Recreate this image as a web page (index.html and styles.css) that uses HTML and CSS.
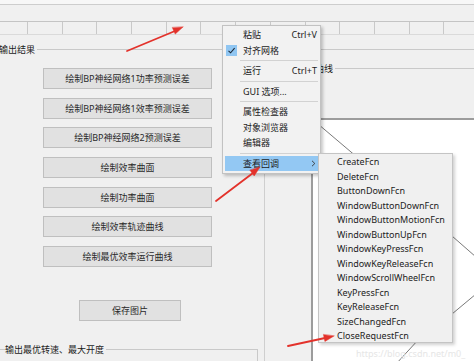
FILE: index.html
```html
<!DOCTYPE html>
<html lang="zh-CN">
<head>
  <meta charset="UTF-8" />
  <title>GUIDE 布局</title>
  <link rel="stylesheet" href="styles.css">
</head>
<body>

  <div class="topbar"></div>
  <div class="toolstrip"></div>
  <div class="ruler">
    <span class="first"></span>
    <span></span><span></span><span></span><span></span><span></span><span></span>
    <span></span><span></span><span></span><span></span><span></span><span></span><span></span>
  </div>

  <div class="group outer">
    <div class="group-title first-title">输出结果</div>
    <div class="group-body">

      <div class="controls">
        <div class="btn-list">
          <div class="btn">绘制BP神经网络1功率预测误差</div>
          <div class="btn">绘制BP神经网络1效率预测误差</div>
          <div class="btn">绘制BP神经网络2预测误差</div>
          <div class="btn">绘制效率曲面</div>
          <div class="btn">绘制功率曲面</div>
          <div class="btn">绘制效率轨迹曲线</div>
          <div class="btn">绘制最优效率运行曲线</div>
        </div>
        <div class="btn save">保存图片</div>
        <div class="group lower">
          <div class="group-title">输出最优转速、最大开度</div>
        </div>
      </div>

      <div class="group plot-group">
        <div class="group-title plot-title">曲线</div>
        <div class="axes">
          <svg width="161" height="241" viewBox="313 120 161 241">
            <g stroke="#6a6a6a" stroke-width="0.9">
              <line x1="318" y1="124" x2="364" y2="163" />
              <line x1="452" y1="236" x2="476" y2="257" />
              <line x1="452" y1="314" x2="476" y2="294" />
              <line x1="419" y1="339" x2="396" y2="364" />
            </g>
            <text x="356" y="357" class="watermark">https://blog.csdn.net/m0_</text>
          </svg>
        </div>
      </div>

    </div>
  </div>

  <!-- context menu -->
  <div class="menu">
    <div class="menu-item"><span></span><span>粘贴</span><span>Ctrl+V</span></div>
    <div class="menu-item">
      <span class="check">
        <svg width="11" height="11" viewBox="0 0 11 11"><polyline points="2.5,5.8 4.6,7.8 8.6,3.2" fill="none" stroke="#1d2a38" stroke-width="1.1"/></svg>
      </span>
      <span>对齐网格</span><span></span>
    </div>
    <div class="menu-sep"></div>
    <div class="menu-item"><span></span><span>运行</span><span>Ctrl+T</span></div>
    <div class="menu-sep"></div>
    <div class="menu-item"><span></span><span>GUI 选项...</span><span></span></div>
    <div class="menu-sep"></div>
    <div class="menu-item"><span></span><span>属性检查器</span><span></span></div>
    <div class="menu-item"><span></span><span>对象浏览器</span><span></span></div>
    <div class="menu-item"><span></span><span>编辑器</span><span></span></div>
    <div class="menu-sep"></div>
    <div class="menu-item active">
      <span></span><span>查看回调</span>
      <span class="chev"><svg width="5" height="7" viewBox="0 0 5 7"><polyline points="1,0.8 3.8,3.5 1,6.2" fill="none" stroke="#333" stroke-width="0.9"/></svg></span>
    </div>
  </div>

  <div class="submenu">
    <div class="sub-item">CreateFcn</div>
    <div class="sub-item">DeleteFcn</div>
    <div class="sub-item">ButtonDownFcn</div>
    <div class="sub-item">WindowButtonDownFcn</div>
    <div class="sub-item">WindowButtonMotionFcn</div>
    <div class="sub-item">WindowButtonUpFcn</div>
    <div class="sub-item">WindowKeyPressFcn</div>
    <div class="sub-item">WindowKeyReleaseFcn</div>
    <div class="sub-item">WindowScrollWheelFcn</div>
    <div class="sub-item">KeyPressFcn</div>
    <div class="sub-item">KeyReleaseFcn</div>
    <div class="sub-item">SizeChangedFcn</div>
    <div class="sub-item">CloseRequestFcn</div>
  </div>

  <!-- red annotation arrows -->
  <svg class="arrows" width="474" height="361" viewBox="0 0 474 361">
    <g fill="#e3322b" stroke="#e3322b" stroke-linecap="round">
      <line x1="127" y1="51" x2="175" y2="31" stroke-width="1.8" />
      <polygon points="183,27 175.2,34.1 172.4,27.7" stroke-width="0.5" />
      <line x1="216" y1="201" x2="253" y2="173" stroke-width="1.8" />
      <polygon points="260,167 254.2,175.9 250,170.3" stroke-width="0.5" />
      <line x1="288" y1="346" x2="325" y2="338" stroke-width="1.8" />
      <polygon points="334,336 324.9,341.5 323.5,334.7" stroke-width="0.5" />
    </g>
  </svg>

</body>
</html>
```

FILE: styles.css
```css
* {
  box-sizing: border-box;
}
body {
  margin: 0;
  width: 474px;
  height: 361px;
  overflow: hidden;
  position: relative;
  background: #f0f0f0;
  font-family: "Noto Sans", "Noto Sans CJK SC", sans-serif;
  font-size: 9px;
  color: #1c1c1c;
}

/* top bars */
.topbar {
  height: 5px;
  background: #f7f7f7;
  border-bottom: 1px solid #cdcdcd;
}
.toolstrip {
  height: 16px;
}
.ruler {
  display: flex;
  height: 14px;
  border-top: 1px solid #c4c4c4;
  border-bottom: 1px solid #dadada;
  overflow: hidden;
}
.ruler span {
  flex: none;
  width: 34.7px;
  border-right: 1px solid #c9c9c9;
}
.ruler span.first {
  width: 28px;
}

/* titled panels */
.group {
  border-top: 1px solid #c9c9c9;
}
.group-title {
  width: max-content;
  margin-top: -7px;
  line-height: 13px;
  padding-right: 2px;
  background: #f0f0f0;
}
.outer {
  margin-top: 14px;
}
.first-title {
  margin-left: -1px;
}
.group-body {
  display: flex;
}

/* left column */
.controls {
  flex: none;
  width: 264px;
  padding-top: 12px;
}
.btn-list {
  display: flex;
  flex-direction: column;
  gap: 8.7px;
}
.btn {
  width: 169px;
  height: 21px;
  margin-left: 43px;
  background: #e1e1e1;
  border: 1px solid #bfbfbf;
  color: #2a2a2a;
  text-align: center;
  line-height: 19px;
}
.btn.save {
  width: 102px;
  margin-left: 79px;
  margin-top: 33px;
}
.lower {
  margin-top: 28px;
  margin-left: -3px;
  width: 261px;
  height: 20px;
  border-right: 1px solid #c9c9c9;
}
.lower .group-title {
  margin-left: 8px;
}

/* plot panel */
.plot-group {
  flex: 1;
  margin-top: 12px;
  border-left: 1px solid #cfcfcf;
  height: 300px;
}
.plot-title {
  margin-left: 50px;
}
.axes {
  margin-left: 46px;
  margin-top: 43px;
  height: 250px;
  background: #fff;
  border-top: 2px solid #9c9c9c;
  border-left: 2px solid #9c9c9c;
}
.axes svg {
  display: block;
}
.watermark {
  font-size: 9px;
  fill: #e6e6e6;
}

/* context menu */
.menu {
  position: absolute;
  left: 222px;
  top: 25px;
  width: 99px;
  padding: 1px 2px 2px 2px;
  background: #f2f2f2;
  border: 1px solid #c2c2c2;
  box-shadow: 2px 2px 3px rgba(0,0,0,0.22);
}
.menu-item {
  display: grid;
  grid-template-columns: 18px 1fr auto;
  align-items: center;
  height: 15.5px;
  padding-right: 1px;
}
.menu-item.active {
  background: #93c8f3;
}
.check {
  width: 11px;
  height: 11px;
  margin-left: 1px;
  background: #90c6f2;
}
.check svg, .chev svg {
  display: block;
}
.chev {
  padding-right: 1px;
}
.menu-sep {
  height: 1px;
  margin: 2px 0 2px 15px;
  background: #d2d2d2;
}

/* callbacks submenu */
.submenu {
  position: absolute;
  left: 318px;
  top: 153px;
  width: 135px;
  height: 190px;
  padding-top: 1px;
  background: #f0f0f0;
  border: 1px solid #c4c4c4;
  box-shadow: 2px 2px 3px rgba(0,0,0,0.18);
}
.sub-item {
  height: 14.5px;
  line-height: 14.5px;
  padding-left: 18px;
}

.arrows {
  position: absolute;
  left: 0;
  top: 0;
  pointer-events: none;
}
```
